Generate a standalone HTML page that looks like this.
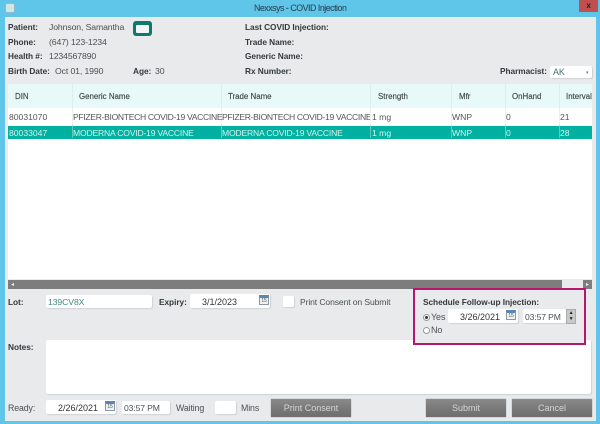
<!DOCTYPE html>
<html><head><meta charset="utf-8"><style>
html,body{margin:0;padding:0;width:600px;height:424px;overflow:hidden;background:#5fc6ea}
body{position:relative;font:8.7px/10px "Liberation Sans",sans-serif;letter-spacing:-.12px;color:#4a5052}
#c{position:absolute;left:0;top:0;width:600px;height:424px;filter:blur(.35px)}
.a,.t,.b,.i{position:absolute;white-space:nowrap}
.b{font-weight:bold;font-size:8.3px;letter-spacing:-.05px;color:#333a3c}
.i{background:#fff;border-radius:2px;box-shadow:1px 1px 1px #cfd2d4}
.s{position:absolute;top:84px;height:54px;width:1px;background:linear-gradient(#dcefef 0,#dcefef 24px,#eee 24px,#eee 41.5px,#5cc9bd 41.5px)}
.h{color:#3f4749;top:92px;font-size:7.9px;letter-spacing:0;-webkit-text-stroke:.15px #3f4749}
.r1,.r2{font-size:8.6px;letter-spacing:-.33px}
.r1{top:112px;color:#555}
.r2{top:128px;color:#d5f3ee;letter-spacing:-.2px}
.n{letter-spacing:0}
.btn{position:absolute;height:18px;top:399px;background:linear-gradient(#8a8a8a,#7a7a7a 50%,#6e6e6e);color:#d5d5d5;text-align:center;line-height:18px;font-size:9px;letter-spacing:0;box-shadow:0 0 1px #888}
.cal{position:absolute;width:10px;height:10px;background:#eef2f5;border:1px solid #8a97a3;border-top:3px solid #5a86b5;box-sizing:border-box;font-size:5px;line-height:6px;text-align:center;color:#555}
.d{font-size:9px;letter-spacing:0;color:#333}
</style></head><body><div id="c">
<div class="a" style="left:5px;top:17px;width:591px;height:404px;background:#e9eaec"></div>
<div class="a" style="left:5px;top:3px;width:10px;height:10px;background:#cfe6e6;border:1px solid #8fbccc;box-sizing:border-box;border-radius:2px"></div>
<div class="t" style="left:254px;top:3px;font-size:8.8px;letter-spacing:-.47px;color:#2d4a5a;-webkit-text-stroke:.1px #2d4a5a">Nexxsys - COVID Injection</div>
<div class="a" style="left:579px;top:0;width:19px;height:12px;background:#c0504d;color:#222;font:bold 8px/11px 'Liberation Sans';text-align:center">x</div>

<div class="b" style="left:8px;top:22px">Patient:</div><div class="t" style="left:49px;top:22px">Johnson, Samantha</div>
<div class="b" style="left:8px;top:37px">Phone:</div><div class="t" style="left:49px;top:37px">(647) 123-1234</div>
<div class="b" style="left:8px;top:51px">Health #:</div><div class="t" style="left:49px;top:51px">1234567890</div>
<div class="b" style="left:8px;top:66px">Birth Date:</div><div class="t" style="left:55px;top:66px">Oct 01, 1990</div>
<div class="b" style="left:133px;top:66px">Age:</div><div class="t" style="left:155px;top:66px">30</div>
<div class="a" style="left:133px;top:21px;width:19px;height:15px;background:#0f7a6c;border-radius:3px"></div>
<div class="a" style="left:136px;top:25px;width:13px;height:8px;background:#f2f5f5;border-radius:1px"></div>

<div class="b" style="left:245px;top:22px">Last COVID Injection:</div>
<div class="b" style="left:245px;top:37px">Trade Name:</div>
<div class="b" style="left:245px;top:51px">Generic Name:</div>
<div class="b" style="left:245px;top:66px">Rx Number:</div>
<div class="b" style="left:500px;top:66px">Pharmacist:</div>
<div class="i" style="left:550px;top:66px;width:42px;height:12px"></div>
<div class="t" style="left:553px;top:67px;font-size:9px;color:#4a7070">AK</div>
<div class="t" style="left:586px;top:68px;font-size:5px;color:#777">▾</div>

<div class="a" style="left:8px;top:84px;width:584px;height:195px;background:#fff"></div>
<div class="a" style="left:8px;top:84px;width:584px;height:24px;background:#e8f9fa"></div>
<div class="a" style="left:8px;top:125.5px;width:584px;height:13px;background:#00b0a0"></div>
<div class="s" style="left:72px"></div><div class="s" style="left:221px"></div><div class="s" style="left:370px"></div><div class="s" style="left:451px"></div><div class="s" style="left:505px"></div><div class="s" style="left:559px"></div>

<div class="t h" style="left:15px">DIN</div><div class="t h" style="left:79px">Generic Name</div><div class="t h" style="left:228px">Trade Name</div><div class="t h" style="left:378px">Strength</div><div class="t h" style="left:459px">Mfr</div><div class="t h" style="left:512px">OnHand</div><div class="t h" style="left:566px">Interval</div>

<div class="t r1 n" style="left:9px">80031070</div><div class="t r1" style="left:73px">PFIZER-BIONTECH COVID-19 VACCINE</div><div class="t r1" style="left:222px;width:148px;overflow:hidden">PFIZER-BIONTECH COVID-19 VACCINE</div><div class="t r1 n" style="left:372px">1 mg</div><div class="t r1 n" style="left:452px">WNP</div><div class="t r1 n" style="left:506px">0</div><div class="t r1 n" style="left:560px">21</div>
<div class="t r2 n" style="left:9px">80033047</div><div class="t r2" style="left:73px">MODERNA COVID-19 VACCINE</div><div class="t r2" style="left:222px">MODERNA COVID-19 VACCINE</div><div class="t r2 n" style="left:372px">1 mg</div><div class="t r2 n" style="left:452px">WNP</div><div class="t r2 n" style="left:506px">0</div><div class="t r2 n" style="left:560px">28</div>

<div class="a" style="left:8px;top:279.5px;width:584px;height:9.5px;background:#7d7d7d"></div>
<div class="a" style="left:562px;top:279.5px;width:21px;height:9.5px;background:#e9eaec"></div>
<div class="t" style="left:11px;top:280px;font-size:6px;color:#eee">◂</div>
<div class="t" style="left:586px;top:280px;font-size:6px;color:#eee">▸</div>

<div class="b" style="left:8px;top:297px">Lot:</div>
<div class="i" style="left:46px;top:295px;width:106px;height:13px"></div>
<div class="t" style="left:48px;top:297px;color:#3f8a80">139CV8X</div>
<div class="b" style="left:159px;top:297px">Expiry:</div>
<div class="i" style="left:190px;top:294px;width:80px;height:14px"></div>
<div class="t d" style="left:202px;top:297px">3/1/2023</div>
<div class="cal" style="left:259px;top:295px">15</div>
<div class="i" style="left:283px;top:296px;width:11px;height:11px"></div>
<div class="t" style="left:300px;top:297px;font-size:8.6px">Print Consent on Submit</div>

<div class="b" style="left:8px;top:342px">Notes:</div>
<div class="i" style="left:46px;top:340px;width:545px;height:54px"></div>

<div class="t" style="left:8px;top:403px;font-size:8.8px">Ready:</div>
<div class="i" style="left:46px;top:400px;width:70px;height:14px"></div>
<div class="t d" style="left:58px;top:403px">2/26/2021</div>
<div class="cal" style="left:105px;top:401px">15</div>
<div class="i" style="left:122px;top:401px;width:48px;height:13px"></div>
<div class="t" style="left:124px;top:403px;font-size:8.6px">03:57 PM</div>
<div class="t" style="left:176px;top:403px;font-size:8.8px">Waiting</div>
<div class="i" style="left:215px;top:401px;width:21px;height:13px"></div>
<div class="t" style="left:241px;top:403px;font-size:8.8px">Mins</div>
<div class="btn" style="left:271px;width:80px">Print Consent</div>
<div class="btn" style="left:426px;width:80px">Submit</div>
<div class="btn" style="left:512px;width:80px">Cancel</div>

<div class="a" style="left:413px;top:288px;width:173px;height:57px;border:2.5px solid #b5176e;box-sizing:border-box;background:#e9eaec"></div>
<div class="b" style="left:423px;top:297px">Schedule Follow-up Injection:</div>
<div class="a" style="left:423px;top:314px;width:5px;height:5px;border:1px solid #999;border-radius:50%;background:#fff"></div>
<div class="a" style="left:425px;top:316px;width:3px;height:3px;border-radius:50%;background:#333"></div>
<div class="t" style="left:431px;top:312px;font-size:9px">Yes</div>
<div class="a" style="left:423px;top:327px;width:5px;height:5px;border:1px solid #999;border-radius:50%;background:#fff"></div>
<div class="t" style="left:431px;top:325px;font-size:9px">No</div>
<div class="i" style="left:448px;top:309px;width:70px;height:14px"></div>
<div class="t d" style="left:460px;top:312px">3/26/2021</div>
<div class="cal" style="left:506px;top:310px">15</div>
<div class="i" style="left:523px;top:309px;width:43px;height:14px"></div>
<div class="t" style="left:525px;top:312px;font-size:8.6px">03:57 PM</div>
<div class="a" style="left:566px;top:309px;width:10px;height:15px;background:#c9c9c9;border:1px solid #aaa;box-sizing:border-box;font-size:5px;line-height:6px;text-align:center;color:#222">▲<br>▼</div>
</div></body></html>
